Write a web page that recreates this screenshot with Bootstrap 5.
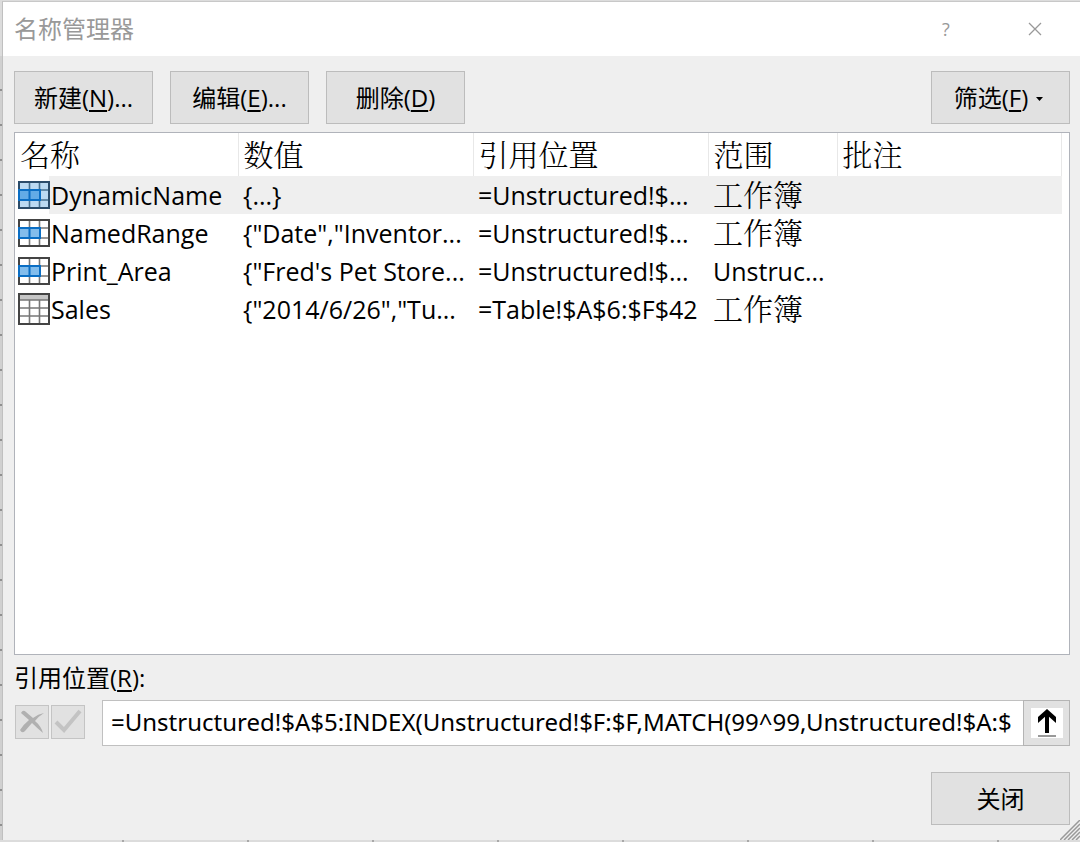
<!DOCTYPE html>
<html lang="zh-CN">
<head>
<meta charset="utf-8">
<meta name="viewport" content="width=device-width, initial-scale=1">
<title>名称管理器</title>
<link href="https://cdn.jsdelivr.net/npm/bootstrap@5.3.0/dist/css/bootstrap.min.css" rel="stylesheet">
<style>
  body {
    font-family: "Open Sans", "Noto Sans CJK SC", sans-serif;
    font-size: 24px;
    line-height: 32px;
    color: #000;
    /* worksheet gridlines peeking out behind the dialog */
    background:
      repeating-linear-gradient(90deg, transparent 0 122px, #a8a8a8 122px 124px, transparent 124px 125px) 0 100% / 100% 2px no-repeat,
      linear-gradient(#dcdcdc, #dcdcdc) 0 100% / 100% 2px no-repeat,
      repeating-linear-gradient(#d0d0d0 0 33px, #909090 33px 35px) 0 56px / 2px 100% no-repeat,
      #dcdcdc;
    padding: 1px 0 2px 2px;
  }
  .dialog { min-height: calc(100vh - 3px); background: #efefef; border-top: 1px solid #c8c8c8; border-left: 1px solid #c0c0c0; }
  .title-bar { height: 54px; padding: 0 33px 0 11px; background: #fff; color: #999; }
  .title-bar h1 { font-size: 24px; line-height: 32px; }
  .caption-btn { width: 24px; height: 32px; color: #999; font-size: 18px; line-height: 24px; }
  .caption-close { margin-left: 65px; }
  .dialog-body { padding: 15px 10px 15px 11px; }
  .cmd { width: 139px; height: 53px; --bs-btn-padding-x: 0; --bs-btn-padding-y: 0; --bs-btn-font-size: 24px;
    --bs-btn-bg: #e1e1e1; --bs-btn-color: #000; --bs-btn-border-color: #bcbcbc; --bs-btn-hover-bg: #d8e6f2;
    --bs-btn-border-radius: 0; --bs-btn-line-height: 32px; }
  .cmd-group { gap: 17px; }
  .cmd u, label u { text-decoration-thickness: 2px; text-underline-offset: 3px; text-decoration-skip-ink: none; }
  .name-list { border: 1px solid #b0b3ba; background: #fff; margin-top: 8px; padding-right: 7px; }
  .name-table { table-layout: fixed; width: 100%; font-size: 25px; }
  .col-name { width: 223px; }
  .col-value { width: 235px; }
  .col-scope { width: 129px; }
  .name-table th, .name-table td { padding: 0 0 0 5px; white-space: nowrap; vertical-align: middle; }
  .name-table th { height: 43px; padding-bottom: 3px; border-right: 1px solid #e8e8e8; line-height: 38px; }
  .name-table td { height: 38px; line-height: 36px; }
  .name-table td:first-child { padding-left: 3px; }
  .name-table .zh, .name-table th { font-size: 30px; font-weight: 300; font-family: "Noto Serif CJK SC", "Noto Sans CJK SC", serif; }
  .name-table .zh { line-height: 34px; padding-bottom: 4px; }
  .name-table .chosen td { background: #efefef; }
  .name-table .chosen td:first-child { background: linear-gradient(90deg, #fff 34px, #efefef 34px); }
  .name-icon { width: 32px; height: 32px; flex: none; margin-right: 1px; }
  .tiny-btns { gap: 2px; margin: 0 17px 2px 1px; }
  .tiny-btn { width: 34px; height: 34px; background: #e1e1e1; border: 1px solid #c4c4c4; }
  .ref-label { margin-top: 7px; }
  .ref-row { height: 46px; margin-top: 6px; }
  .ref-input, .ref-input:focus { font-family: "Noto Sans", "Noto Sans CJK SC", sans-serif; font-size: 24px; line-height: 32px; min-width: 0; color: #000; border: 1px solid #c0c0c0; border-right: 0; border-radius: 0; padding: 0 4px 2px 8px; }
  .collapse-btn { width: 47px; background: #e1e1e1; border: 1px solid #b4b4b4; }
  .close-row { margin-top: 26px; }
  .grip { right: 0; bottom: 0; width: 20px; height: 20px; }
</style>
</head>
<body>
<svg class="d-none">
  <symbol id="range" viewBox="0 0 32 32">
    <path fill="#fff" d="M1 3h30v26H1z"/>
    <path fill="none" stroke="#777" stroke-width="1.6" d="M11.5 3v26M21.5 3v26M2 11h28M2 21h28"/>
    <path fill="none" stroke="#444" stroke-width="2" d="M1 3h30v26H1z"/>
    <path fill="#83bdec" stroke="#0a6ec4" stroke-width="2" d="M1 11h21v10H1zM11.5 11v10"/>
  </symbol>
  <symbol id="range-on" viewBox="0 0 32 32">
    <path fill="#bcdaf2" d="M1 3h30v26H1z"/>
    <path fill="none" stroke="#46708f" stroke-width="1.6" d="M11.5 3v26M21.5 3v26M2 11h28M2 21h28"/>
    <path fill="none" stroke="#2b4c6a" stroke-width="2" d="M1 3h30v26H1z"/>
    <path fill="#62abe6" stroke="#0a6ec4" stroke-width="2" d="M1 11h21v10H1zM11.5 11v10"/>
  </symbol>
  <symbol id="sheet" viewBox="0 0 32 32">
    <path fill="#fff" d="M1 1h30v30H1z"/><path fill="#c6c6c6" d="M2 2h28v5H2z"/>
    <path fill="none" stroke="#777" stroke-width="1.6" d="M2 7h28M2 15h28M2 23h28M11.5 7v24M21.5 7v24"/>
    <path fill="none" stroke="#444" stroke-width="2" d="M1 1h30v30H1z"/>
  </symbol>
</svg>
<main class="dialog d-flex flex-column position-relative">
  <header class="title-bar d-flex align-items-center">
    <h1 class="fw-normal m-0 me-auto">名称管理器</h1>
    <button class="caption-btn btn p-0 border-0" type="button" aria-label="帮助">?</button>
    <button class="caption-btn caption-close btn p-0 border-0 d-flex align-items-center justify-content-center" type="button" aria-label="关闭窗口">
      <svg width="14" height="14" viewBox="0 0 14 14"><path d="M1 1l12 12M13 1L1 13" stroke="#999" stroke-width="1.3"/></svg>
    </button>
  </header>
  <div class="dialog-body d-flex flex-column flex-grow-1">
    <div class="d-flex">
      <div class="cmd-group d-flex me-auto">
        <button class="cmd btn" type="button">新建(<u>N</u>)...</button>
        <button class="cmd btn" type="button">编辑(<u>E</u>)...</button>
        <button class="cmd btn" type="button">删除(<u>D</u>)</button>
      </div>
      <button class="cmd btn" type="button">筛选(<u>F</u>)<svg class="ms-2 me-1" width="7" height="16" viewBox="0 0 7 16"><path d="M0 5h7L3.5 9z"/></svg></button>
    </div>
    <div class="name-list flex-grow-1">
      <table class="name-table">
        <colgroup><col class="col-name"><col class="col-value"><col class="col-value"><col class="col-scope"><col></colgroup>
        <thead><tr><th>名称</th><th>数值</th><th>引用位置</th><th>范围</th><th>批注</th></tr></thead>
        <tbody>
          <tr class="chosen"><td><div class="d-flex align-items-center"><svg class="name-icon"><use href="#range-on"/></svg>DynamicName</div></td><td>{...}</td><td>=Unstructured!$...</td><td class="zh">工作簿</td><td></td></tr>
          <tr><td><div class="d-flex align-items-center"><svg class="name-icon"><use href="#range"/></svg>NamedRange</div></td><td>{"Date","Inventor...</td><td>=Unstructured!$...</td><td class="zh">工作簿</td><td></td></tr>
          <tr><td><div class="d-flex align-items-center"><svg class="name-icon"><use href="#range"/></svg>Print_Area</div></td><td>{"Fred's Pet Store...</td><td>=Unstructured!$...</td><td>Unstruc...</td><td></td></tr>
          <tr><td><div class="d-flex align-items-center"><svg class="name-icon"><use href="#sheet"/></svg>Sales</div></td><td>{"2014/6/26","Tu...</td><td>=Table!$A$6:$F$42</td><td class="zh">工作簿</td><td></td></tr>
        </tbody>
      </table>
    </div>
    <label class="ref-label" for="refers">引用位置(<u>R</u>):</label>
    <div class="ref-row d-flex">
      <div class="tiny-btns d-flex align-items-center">
        <button class="tiny-btn p-0 d-flex" type="button" aria-label="取消" disabled><svg width="32" height="32" viewBox="0 0 32 32"><path fill="#b0b0b0" d="M5 7Q7 3 10 6L17 12Q22 8 28 7Q23 10 19 15Q25 20 27 27Q21 22 16 17L9 25Q6 28 4 24Q8 18 13 14Z"/></svg></button>
        <button class="tiny-btn p-0 d-flex" type="button" aria-label="输入" disabled><svg width="32" height="32" viewBox="0 0 32 32"><path d="M4 16L12 24L28 5" fill="none" stroke="#c3c3c3" stroke-width="4"/></svg></button>
      </div>
      <input class="ref-input form-control flex-grow-1" id="refers" type="text" value="=Unstructured!$A$5:INDEX(Unstructured!$F:$F,MATCH(99^99,Unstructured!$A:$">
      <button class="collapse-btn p-0 d-flex align-items-center justify-content-center flex-shrink-0" type="button" aria-label="折叠对话框"><svg width="32" height="30" viewBox="0 0 32 30"><path fill="#fff" d="M0 0h32v30H0z"/><path d="M16 25V4" stroke="#000" stroke-width="4"/><path d="M16 1L25 9V15L16 7L7 15V9Z"/><path d="M7 28h18" stroke="#777" stroke-width="1.5"/></svg></button>
    </div>
    <div class="close-row d-flex justify-content-end"><button class="cmd btn" type="button">关闭</button></div>
  </div>
  <svg class="grip position-absolute" viewBox="0 0 20 20"><path d="M0 20L20 0M4 20L20 4M8 20L20 8M12 20L20 12M16 20L20 16" stroke="#999" stroke-width="1.5"/></svg>
</main>
<script src="https://cdn.jsdelivr.net/npm/bootstrap@5.3.0/dist/js/bootstrap.bundle.min.js"></script>
</body>
</html>
